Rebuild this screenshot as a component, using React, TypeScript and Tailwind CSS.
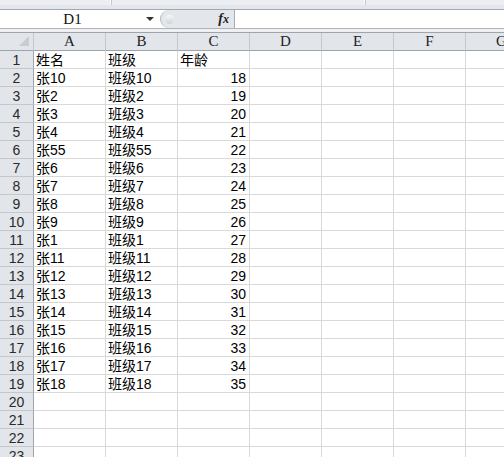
import React from "react";

const data: [string, string, string][] = [
  ["姓名", "班级", "年龄"],
  ["张10", "班级10", "18"],
  ["张2", "班级2", "19"],
  ["张3", "班级3", "20"],
  ["张4", "班级4", "21"],
  ["张55", "班级55", "22"],
  ["张6", "班级6", "23"],
  ["张7", "班级7", "24"],
  ["张8", "班级8", "25"],
  ["张9", "班级9", "26"],
  ["张1", "班级1", "27"],
  ["张11", "班级11", "28"],
  ["张12", "班级12", "29"],
  ["张13", "班级13", "30"],
  ["张14", "班级14", "31"],
  ["张15", "班级15", "32"],
  ["张16", "班级16", "33"],
  ["张17", "班级17", "34"],
  ["张18", "班级18", "35"],
  ["", "", ""],
  ["", "", ""],
  ["", "", ""],
  ["", "", ""],
];

const cols = ["A", "B", "C", "D", "E", "F", "G"];

export default function App() {
  return (
    <div className="w-[504px] h-[457px] overflow-hidden bg-white font-[family-name:Liberation_Sans,Noto_Sans_CJK_SC,sans-serif] text-black">
      {/* top strip */}
      <div className="flex h-[5px] bg-[#eceef1]">
        <div className="w-[111px] border-r border-[#f9fafb]" />
        <div className="w-[254px] border-l border-r border-l-[#c3c7cc] border-r-[#f9fafb]" />
        <div className="flex-1 border-l border-[#c3c7cc]" />
      </div>
      <div className="h-[5px] bg-[#e3e6ea] border-b border-[#a3a8ae]" />
      {/* formula row */}
      <div className="flex h-[18px]">
        <div className="w-[160px] shrink-0 flex items-center bg-white">
          <div className="w-[145px] text-center font-[family-name:Liberation_Serif,serif] text-[15px] leading-none text-[#111]">
            D1
          </div>
          <svg width="9" height="5" viewBox="0 0 9 5" className="ml-[1px]">
            <path d="M0 0 L8 0 L4 4 Z" fill="#333" />
          </svg>
        </div>
        <div className="w-[74px] shrink-0 relative flex items-center bg-[#e3e6ea] rounded-l-full border-l border-[#b5b9bf]">
          <div className="ml-[3px] w-[11px] h-[11px] rounded-full bg-gradient-to-b from-[#f7f8f9] to-[#cfd3d8] border border-[#e9ebee]" />
          <span className="ml-auto mr-[5px] font-[family-name:Liberation_Serif,serif] italic font-bold text-[14px] leading-none text-[#222]">
            f<span className="text-[12px]">x</span>
          </span>
        </div>
        <div className="flex-1 bg-white border-l border-[#a9adb3]" />
      </div>
      <div className="h-[5px] bg-[#eef0f2] border-y border-t-[#b0b4ba] border-b-[#9ea4ab]" />
      {/* grid */}
      <div className="flex flex-col">
        <div className="flex h-[18px] shrink-0">
          <div className="w-[34px] shrink-0 bg-[#e2e5e9] border-r border-b border-r-[#c4c8cd] border-b-[#9ea4ab] relative">
            <svg width="11" height="11" viewBox="0 0 11 11" className="absolute right-[3px] bottom-[3px]">
              <path d="M10 0 L10 10 L0 10 Z" fill="#c9ccd1" />
            </svg>
          </div>
          {cols.map((c) => (
            <div
              key={c}
              className="w-[72px] shrink-0 bg-[#e2e5e9] border-r border-b border-r-[#c4c8cd] border-b-[#9ea4ab] flex items-center justify-center font-[family-name:Liberation_Serif,serif] text-[15px] leading-none text-[#222]"
            >
              {c}
            </div>
          ))}
        </div>
        {data.map((r, i) => (
          <div key={i} className="flex h-[18px] shrink-0">
            <div className="w-[34px] shrink-0 bg-[#e2e5e9] border-r border-b border-r-[#9ea4ab] border-b-[#c4c8cd] flex items-center justify-center text-[14px] leading-none text-[#2a2a2a]">
              {i + 1}
            </div>
            <div className="w-[72px] shrink-0 border-r border-b border-[#d9d9d9] flex items-center pl-[2px] text-[14px] leading-none whitespace-nowrap">
              {r[0]}
            </div>
            <div className="w-[72px] shrink-0 border-r border-b border-[#d9d9d9] flex items-center pl-[2px] text-[14px] leading-none whitespace-nowrap">
              {r[1]}
            </div>
            <div
              className={
                i === 0
                  ? "w-[72px] shrink-0 border-r border-b border-[#d9d9d9] flex items-center pl-[2px] text-[14px] leading-none whitespace-nowrap"
                  : "w-[72px] shrink-0 border-r border-b border-[#d9d9d9] flex items-center justify-end pr-[3px] text-[14px] leading-none whitespace-nowrap"
              }
            >
              {r[2]}
            </div>
            {[0, 1, 2, 3].map((k) => (
              <div key={k} className="w-[72px] shrink-0 border-r border-b border-[#d9d9d9]" />
            ))}
          </div>
        ))}
      </div>
    </div>
  );
}
